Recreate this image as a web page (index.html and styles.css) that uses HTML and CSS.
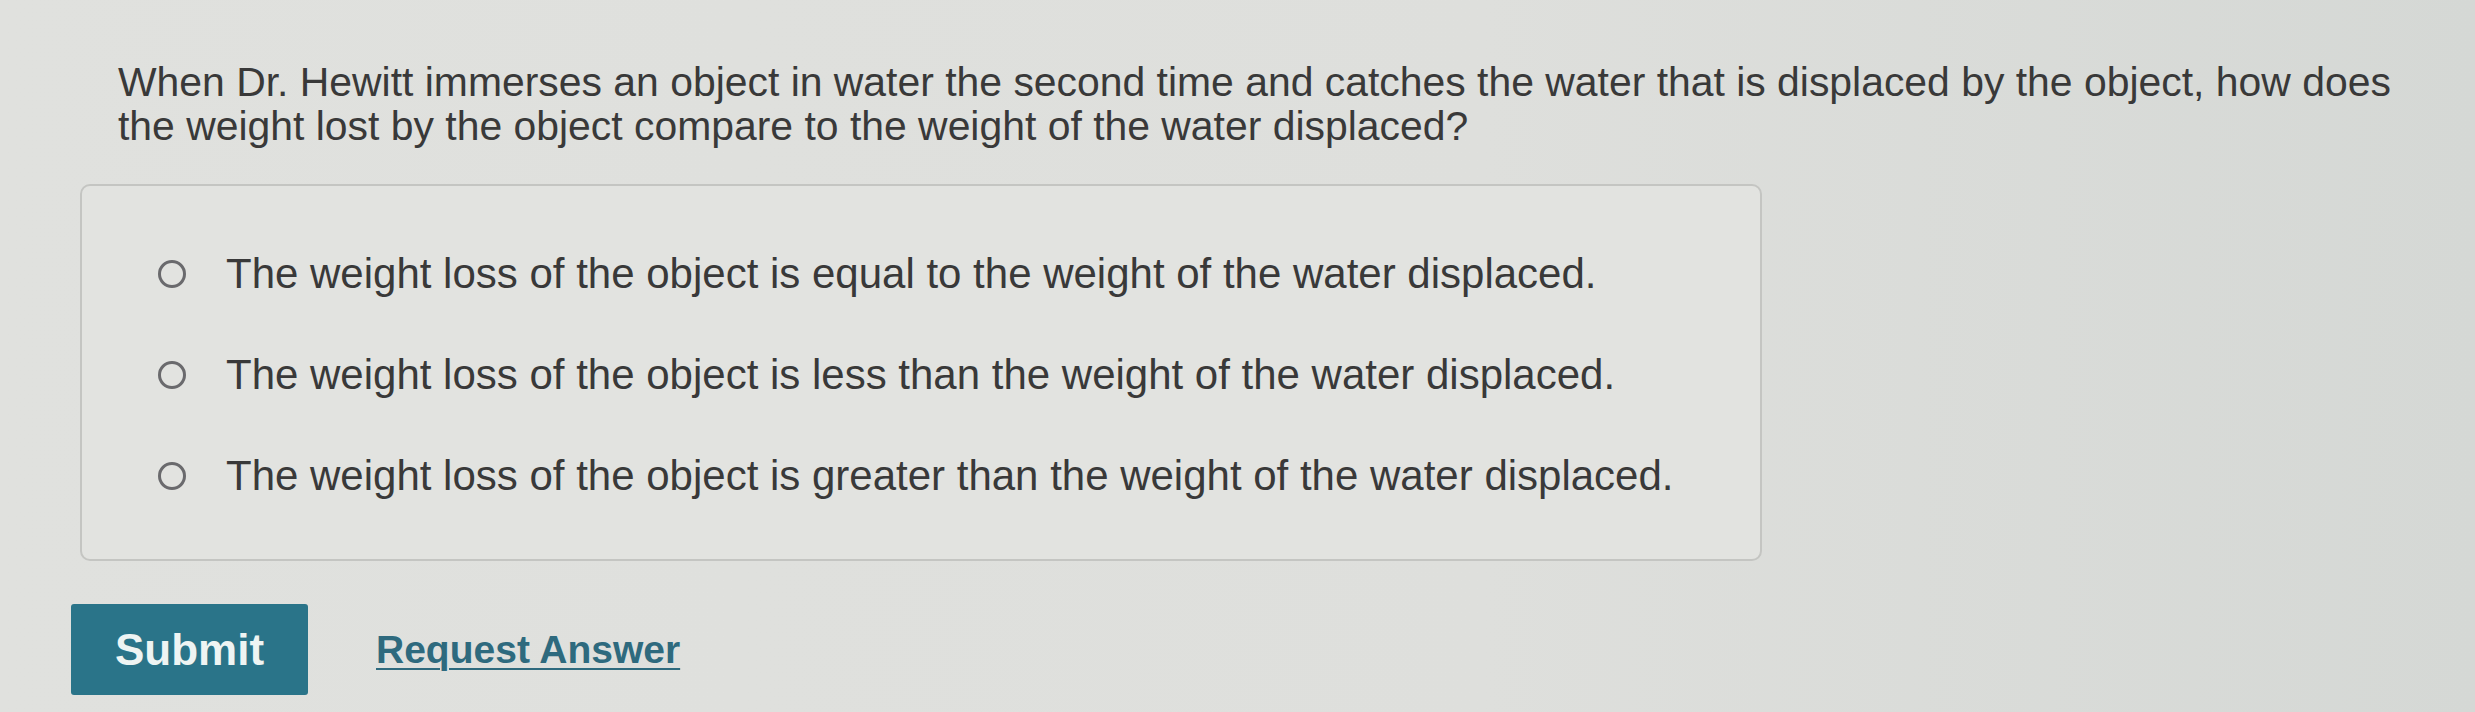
FILE: index.html
```html
<!DOCTYPE html>
<html lang="en">
<head>
  <meta charset="UTF-8" />
  <title>Buoyancy - Question</title>
  <meta name="viewport" content="width=device-width, initial-scale=1.0"/>
  <link rel="stylesheet" href="styles.css">
</head>
<body>
  <div class="page">
    <p class="question">When Dr. Hewitt immerses an object in water the second time and catches the water that is displaced by the object, how does the weight lost by the object compare to the weight of the water displaced?</p>

    <div class="choices">
      <label class="choice"><input type="radio" name="answer" value="a"> The weight loss of the object is equal to the weight of the water displaced.</label>
      <label class="choice"><input type="radio" name="answer" value="b"> The weight loss of the object is less than the weight of the water displaced.</label>
      <label class="choice"><input type="radio" name="answer" value="c"> The weight loss of the object is greater than the weight of the water displaced.</label>
    </div>

    <div class="actions">
      <button class="submit">Submit</button>
      <a href="#" class="request">Request Answer</a>
    </div>
  </div>
</body>
</html>
```

FILE: styles.css
```css
body {
  margin: 0;
  font-family: 'Liberation Sans', Arial, sans-serif;
  background: linear-gradient(90deg, #e0e1de 0%, #dedfdc 60%, #d5d8d5 100%);
  color: #393939;
  height: 712px;
  overflow: hidden;
}
.page {
  padding: 60px 0 0 80px;
}
.question {
  margin: 0 0 36px 38px;
  width: 2300px;
  font-size: 40.9px;
  line-height: 44px;
}
.choices {
  width: 1682px;
  height: 377px;
  box-sizing: border-box;
  border: 2px solid #c4c5c2;
  border-radius: 10px;
  background: #e2e3e0;
  padding: 63px 0 0 76px;
  display: flex;
  flex-direction: column;
  gap: 51px;
}
.choice {
  display: flex;
  align-items: center;
  gap: 40px;
  font-size: 42px;
  line-height: 50px;
}
.choice input {
  appearance: none;
  margin: 0;
  width: 28px;
  height: 28px;
  border: 3px solid #6a6a6d;
  border-radius: 50%;
  background: transparent;
  flex-shrink: 0;
}
.actions {
  margin: 43px 0 0 -9px;
  display: flex;
  align-items: center;
  gap: 68px;
}
.submit {
  width: 237px;
  height: 91px;
  background-color: #2a7489;
  color: #eef4f3;
  border: none;
  border-radius: 3px;
  font-family: inherit;
  font-size: 44px;
  font-weight: bold;
  cursor: pointer;
}
.request {
  color: #2e6a7e;
  font-size: 39px;
  font-weight: bold;
  text-decoration: underline;
  text-underline-offset: 5px;
  text-decoration-thickness: 2px;
}
```
